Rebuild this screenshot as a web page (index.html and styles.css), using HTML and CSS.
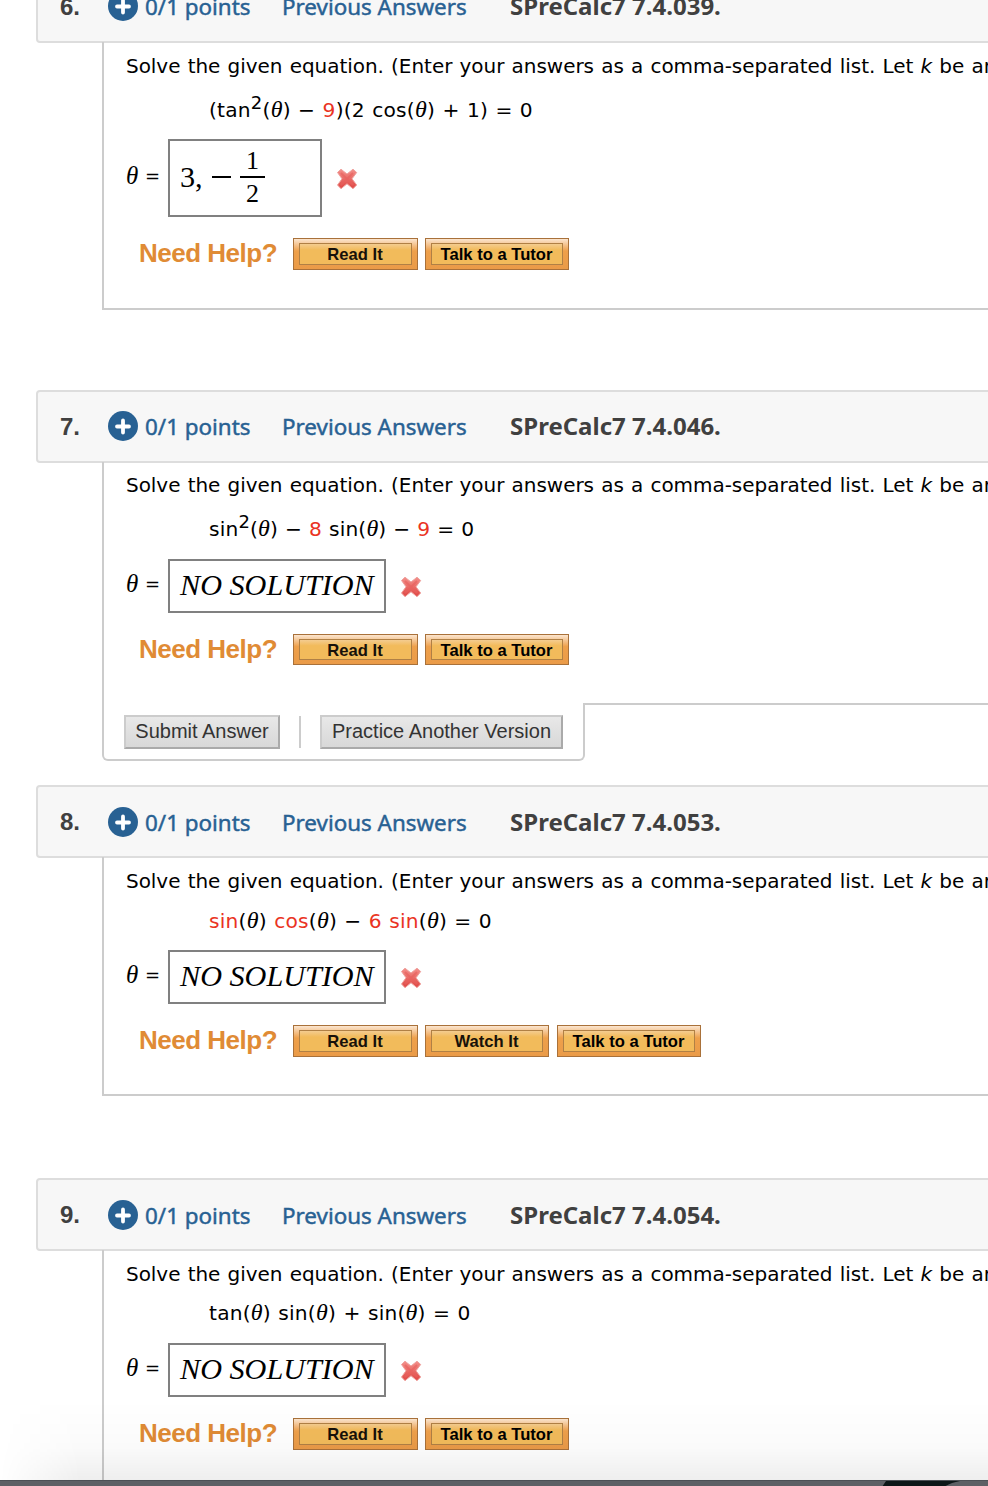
FILE: index.html
```
<!DOCTYPE html>
<html lang="en">
<head>
<meta charset="utf-8">
<title>Homework</title>
<link rel="stylesheet" href="styles.css">
</head>
<body>
<svg class="defs" width="0" height="0" aria-hidden="true">
  <defs>
    <linearGradient id="xg" x1="0" y1="0" x2="0" y2="1"><stop offset="0" stop-color="#f3908b"/><stop offset="1" stop-color="#df4643"/></linearGradient>
    <symbol id="plus" viewBox="0 0 30 30"><circle cx="15" cy="15" r="15" fill="#286193"/><path d="M15 9.5v12M9 15.5h12" stroke="#fff" stroke-width="3.8" stroke-linecap="round"/></symbol>
    <symbol id="wrong" viewBox="0 0 22 22"><path d="M1.5 4.5 5 1.2 11 6 17 1.2 20.7 4.5 16 10.8 20.7 17 17 20.7 11 15.8 5 20.7 1.5 17 6 10.8Z" fill="url(#xg)" stroke="#efa19d" stroke-width="1" stroke-linejoin="round"/><path d="M5 5 17 17M17 5 5 17" stroke="#e8605d" stroke-width="2" opacity=".6"/></symbol>
  </defs>
</svg>
<main class="page">
  <section class="question q6">
    <header class="bar"><span class="num">6.</span><svg class="plus"><use href="#plus"/></svg><a class="points">0/1 points</a><a class="previous">Previous Answers</a><b class="source">SPreCalc7 7.4.039.</b></header>
    <div class="body">
      <p class="prompt">Solve the given equation. (Enter your answers as a comma-separated list. Let <i>k</i> be any integer.)</p>
      <p class="equation">(tan<sup>2</sup>(<i>θ</i>) − <em>9</em>)(2 cos(<i>θ</i>) + 1) = 0</p>
      <div class="answer"><span class="theta"><i>θ</i> =</span><span class="box tall"><span class="three">3,</span><span class="minus"></span><span class="frac"><span>1</span><span>2</span></span></span><svg class="wrong"><use href="#wrong"/></svg></div>
      <div class="help"><span class="need">Need Help?</span><span class="btn"><span>Read It</span></span><span class="btn tutor"><span>Talk to a Tutor</span></span></div>
    </div>
  </section>
  <section class="question q7">
    <header class="bar"><span class="num">7.</span><svg class="plus"><use href="#plus"/></svg><a class="points">0/1 points</a><a class="previous">Previous Answers</a><b class="source">SPreCalc7 7.4.046.</b></header>
    <div class="body">
      <p class="prompt">Solve the given equation. (Enter your answers as a comma-separated list. Let <i>k</i> be any integer.)</p>
      <p class="equation">sin<sup>2</sup>(<i>θ</i>) − <em>8</em> sin(<i>θ</i>) − <em>9</em> = 0</p>
      <div class="answer"><span class="theta"><i>θ</i> =</span><span class="box"><i>NO SOLUTION</i></span><svg class="wrong"><use href="#wrong"/></svg></div>
      <div class="help"><span class="need">Need Help?</span><span class="btn"><span>Read It</span></span><span class="btn tutor"><span>Talk to a Tutor</span></span></div>
    </div>
    <div class="foot"><div class="actions"><span class="action submit">Submit Answer</span><span class="divider"></span><span class="action practice">Practice Another Version</span></div><div class="edge"></div></div>
  </section>
  <section class="question q8">
    <header class="bar"><span class="num">8.</span><svg class="plus"><use href="#plus"/></svg><a class="points">0/1 points</a><a class="previous">Previous Answers</a><b class="source">SPreCalc7 7.4.053.</b></header>
    <div class="body">
      <p class="prompt">Solve the given equation. (Enter your answers as a comma-separated list. Let <i>k</i> be any integer.)</p>
      <p class="equation"><em>sin</em>(<i>θ</i>) <em>cos</em>(<i>θ</i>) − <em>6 sin</em>(<i>θ</i>) = 0</p>
      <div class="answer"><span class="theta"><i>θ</i> =</span><span class="box"><i>NO SOLUTION</i></span><svg class="wrong"><use href="#wrong"/></svg></div>
      <div class="help"><span class="need">Need Help?</span><span class="btn"><span>Read It</span></span><span class="btn watch"><span>Watch It</span></span><span class="btn tutor"><span>Talk to a Tutor</span></span></div>
    </div>
  </section>
  <section class="question q9">
    <header class="bar"><span class="num">9.</span><svg class="plus"><use href="#plus"/></svg><a class="points">0/1 points</a><a class="previous">Previous Answers</a><b class="source">SPreCalc7 7.4.054.</b></header>
    <div class="body">
      <p class="prompt">Solve the given equation. (Enter your answers as a comma-separated list. Let <i>k</i> be any integer.)</p>
      <p class="equation">tan(<i>θ</i>) sin(<i>θ</i>) + sin(<i>θ</i>) = 0</p>
      <div class="answer"><span class="theta"><i>θ</i> =</span><span class="box"><i>NO SOLUTION</i></span><svg class="wrong"><use href="#wrong"/></svg></div>
      <div class="help"><span class="need">Need Help?</span><span class="btn"><span>Read It</span></span><span class="btn tutor"><span>Talk to a Tutor</span></span></div>
    </div>
  </section>
</main>
<div class="shade"></div>
<div class="desktop"><svg width="988" height="6"><path d="M882 6 886 0h74q-10 2-16 6Z" fill="#0d1718"/></svg></div>
</body>
</html>
```
FILE: styles.css
```
* { box-sizing: border-box; }
html, body { margin: 0; height: 1486px; overflow: hidden; background: #fff; }
body { position: relative; color: #000; font-family: "DejaVu Sans", sans-serif; font-size: 20.2px; }
.defs { position: absolute; }
p { margin: 0; }
.page { width: 988px; height: 1480px; overflow: hidden; display: flex; flex-direction: column; }
.question { flex: none; padding-left: 36px; }
.q6 { margin-top: -30px; }
.bar { width: 990px; height: 73px; margin-bottom: -1px; display: flex; align-items: center; padding-left: 22px; background: #f7f7f7; border: 2px solid #ddd; border-radius: 4px; white-space: nowrap; font-family: "Noto Sans", sans-serif; }
.bar > * { flex: none; }
.q8 .bar, .q9 .bar { padding-top: 2px; }
.num { width: 48px; font: bold 24px "Liberation Sans", sans-serif; color: #404040; }
.q8 .num, .q9 .num { padding-bottom: 2px; }
.plus { width: 30px; height: 30px; margin: 0 7px 1px 0; }
.points, .previous { font-size: 22.4px; color: #286193; -webkit-text-stroke: .45px #286193; }
.points { width: 137px; }
.previous { width: 228px; }
.source { font-size: 24px; color: #404040; padding-bottom: 2px; }
.body { margin-left: 66px; padding-left: 21px; border-left: 2px solid #ccc; display: flex; flex-direction: column; white-space: nowrap; }
.prompt { height: 47px; line-height: 48px; padding-left: 1px; font-size: 20px; letter-spacing: -.04px; word-spacing: .9px; }
.q7 .prompt { line-height: 46px; }
.equation { height: 42px; line-height: 40px; padding-left: 84px; letter-spacing: .22px; word-spacing: .7px; }
.q7 .equation { letter-spacing: .15px; word-spacing: .4px; line-height: 39px; }
.equation sup { font-size: 18px; line-height: 0; vertical-align: 8px; }
.equation i, .theta i { font-family: "Liberation Serif", serif; font-size: 24px; }
.equation em { font-style: normal; color: #ea3323; }
.answer { display: flex; align-items: center; margin-top: 8px; }
.theta { width: 43px; padding: 0 0 4px 1px; font-size: 18px; line-height: 22px; white-space: nowrap; word-spacing: 1px; }
.theta i { font-size: 25px; line-height: 0; vertical-align: -2px; }
.box { width: 218px; height: 54px; border: 2px solid #808080; padding-left: 10px; line-height: 48px; font-family: "Liberation Serif", serif; font-size: 30.2px; }
.tall { width: 154px; height: 78px; display: flex; align-items: center; padding-bottom: 2px; }
.three { width: 32px; }
.minus { width: 19px; height: 1.5px; background: #000; margin-right: 9px; }
.frac { width: 25px; display: flex; flex-direction: column; text-align: center; font-size: 26px; line-height: 31px; }
.frac span:first-child { border-bottom: 2px solid #000; }
.wrong { width: 22px; height: 22px; margin: 2px 0 0 14px; }
.help { display: flex; margin: 21px 0 0 13px; height: 32px; font-family: "Liberation Sans", sans-serif; }
.need { width: 155px; padding-left: 1px; font-size: 26px; font-weight: bold; letter-spacing: -.5px; line-height: 31px; color: #e08b35; }
.btn { width: 125px; height: 32px; margin-right: 7px; border: 1px solid #a9713a; padding: 4px 5px; background: linear-gradient(#fbe5cf, #eea04b 40%, #ea9b48); font-size: 16.6px; font-weight: bold; text-align: center; }
.btn span { display: block; height: 22px; line-height: 22px; border: 1px solid #b08045; background: linear-gradient(#f4cc90, #f2bb5b 30%); color: #17110a; padding-right: 1px; }
.tutor { width: 144px; }
.watch { width: 124px; margin-right: 8px; }
.btn.tutor span { color: #000; }
.q6 .body { height: 268px; border-bottom: 2px solid #ccc; margin-bottom: 80px; }
.q7 .body { height: 241px; }
.q7 .btn { height: 31px; }
.q7 .btn span { height: 21px; }
.q8 .body { height: 239px; border-bottom: 2px solid #ccc; margin-bottom: 82px; }
.q8 .equation, .q9 .equation { height: 38px; line-height: 33px; }
.q9 .equation { line-height: 31px; }
.q9 .body { height: 241px; }
.foot { height: 58px; margin: 0 0 24px 66px; display: flex; }
.actions { width: 483px; height: 58px; border: 2px solid #ccc; border-top: 0; border-radius: 0 0 6px 6px; display: flex; align-items: center; padding: 2px 0 0 20px; font: 20px "Liberation Sans", sans-serif; color: #333; }
.edge { flex: 1; border-top: 2px solid #ccc; margin-left: -2px; }
.action { height: 34px; line-height: 29px; text-align: center; border: 2px solid; border-color: #ccc #aaa #aaa #ccc; background: linear-gradient(#e8e8e8, #d8d8d8); white-space: nowrap; }
.submit { width: 156px; }
.practice { width: 243px; }
.divider { width: 2px; height: 32px; background: #ccc; margin: 0 19px; }
.shade { position: absolute; left: 0; top: 1400px; width: 988px; height: 80px; background: linear-gradient(transparent, rgba(0,0,0,.02) 60%, rgba(0,0,0,.065)); -webkit-mask-image: linear-gradient(90deg, transparent, #000 80px); mask-image: linear-gradient(90deg, transparent, #000 80px); }
.desktop { height: 6px; background: #5d6065; border-top: 1px solid #4c5055; overflow: hidden; }
.desktop svg { display: block; }
```
